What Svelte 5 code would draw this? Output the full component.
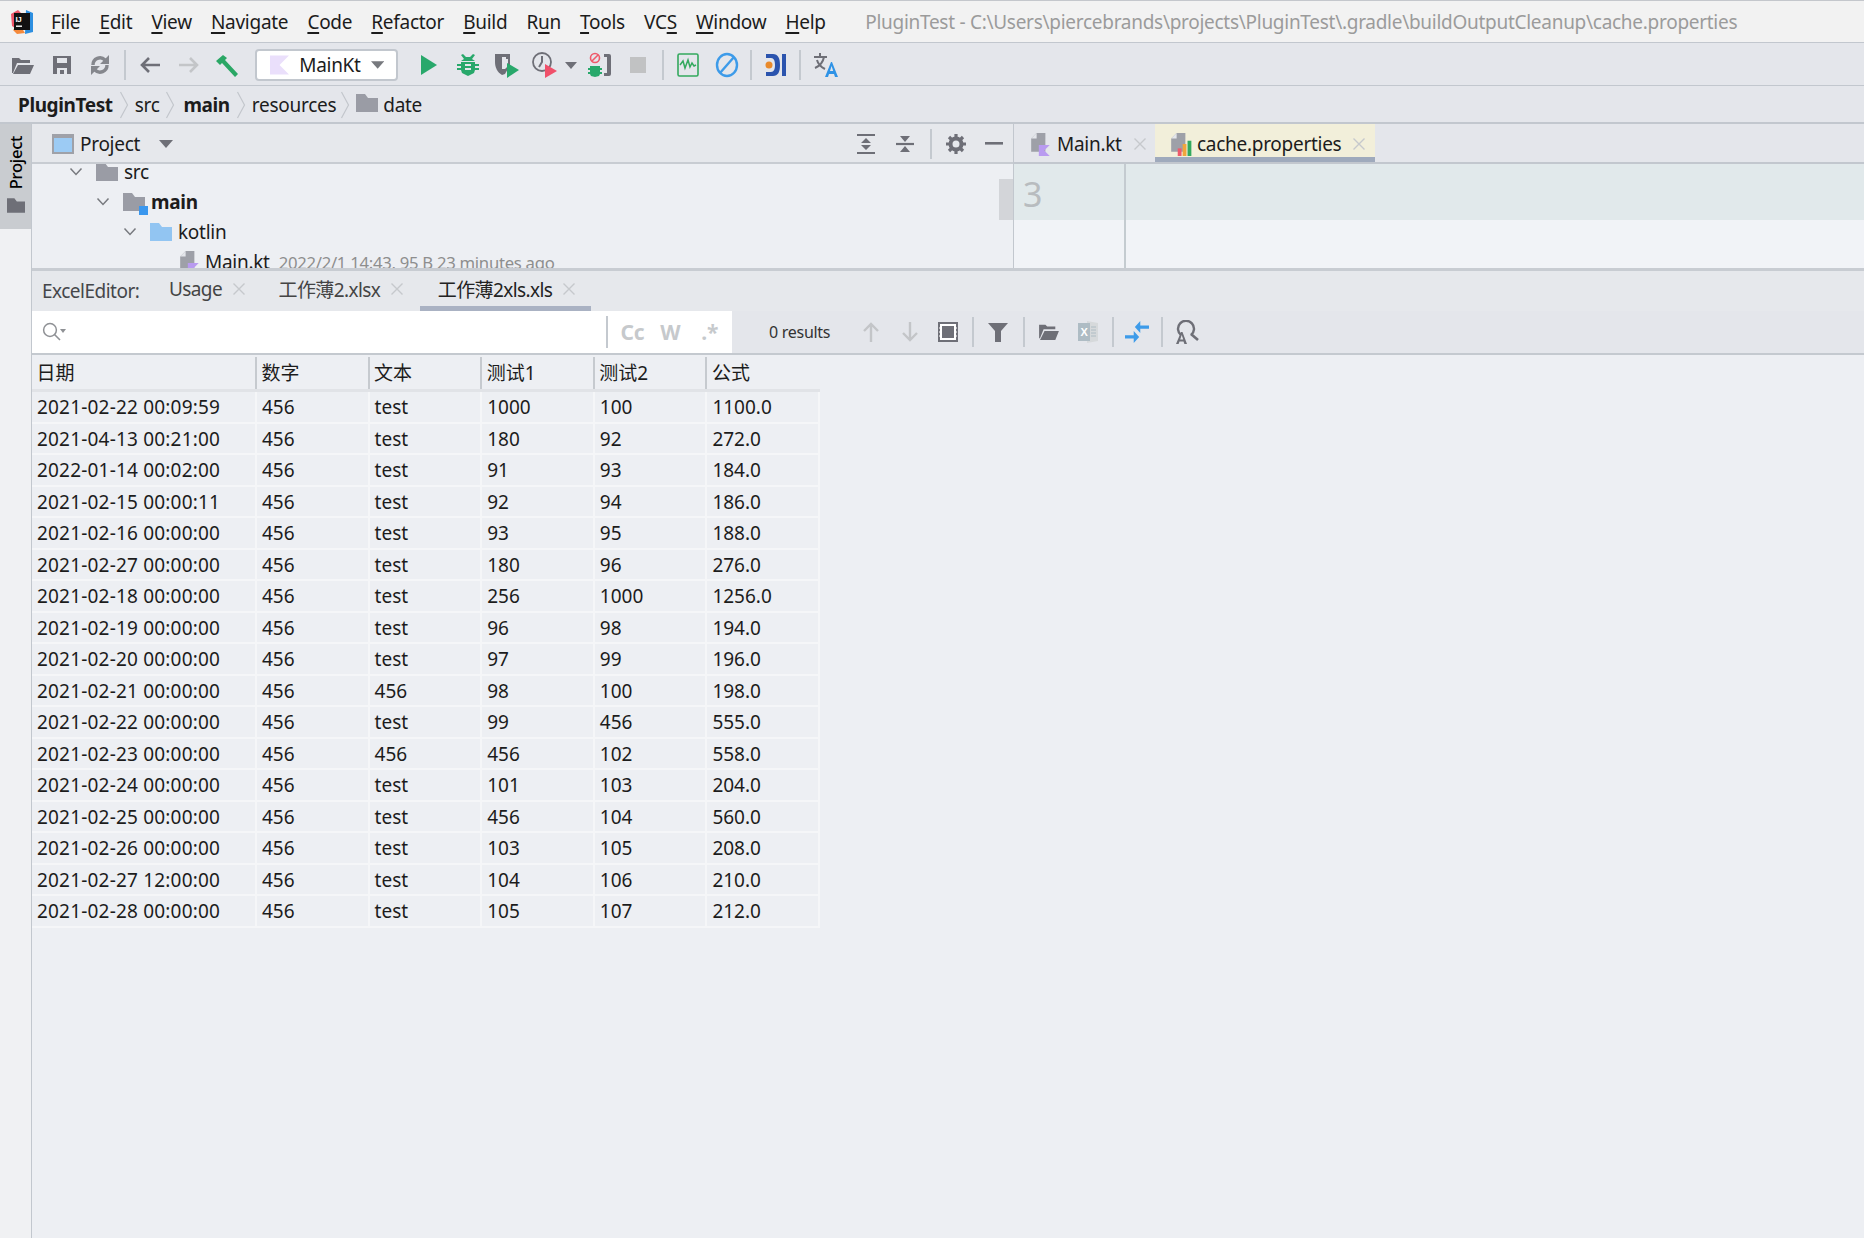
<script lang="ts">
  const menu = [
    ['', 'F', 'ile'],
    ['', 'E', 'dit'],
    ['', 'V', 'iew'],
    ['', 'N', 'avigate'],
    ['', 'C', 'ode'],
    ['', 'R', 'efactor'],
    ['', 'B', 'uild'],
    ['R', 'u', 'n'],
    ['', 'T', 'ools'],
    ['VC', 'S', ''],
    ['', 'W', 'indow'],
    ['', 'H', 'elp']
  ];

  const columns = ['日期', '数字', '文本', '测试1', '测试2', '公式'];

  const rows = [
    ['2021-02-22 00:09:59', '456', 'test', '1000', '100', '1100.0'],
    ['2021-04-13 00:21:00', '456', 'test', '180', '92', '272.0'],
    ['2022-01-14 00:02:00', '456', 'test', '91', '93', '184.0'],
    ['2021-02-15 00:00:11', '456', 'test', '92', '94', '186.0'],
    ['2021-02-16 00:00:00', '456', 'test', '93', '95', '188.0'],
    ['2021-02-27 00:00:00', '456', 'test', '180', '96', '276.0'],
    ['2021-02-18 00:00:00', '456', 'test', '256', '1000', '1256.0'],
    ['2021-02-19 00:00:00', '456', 'test', '96', '98', '194.0'],
    ['2021-02-20 00:00:00', '456', 'test', '97', '99', '196.0'],
    ['2021-02-21 00:00:00', '456', '456', '98', '100', '198.0'],
    ['2021-02-22 00:00:00', '456', 'test', '99', '456', '555.0'],
    ['2021-02-23 00:00:00', '456', '456', '456', '102', '558.0'],
    ['2021-02-24 00:00:00', '456', 'test', '101', '103', '204.0'],
    ['2021-02-25 00:00:00', '456', 'test', '456', '104', '560.0'],
    ['2021-02-26 00:00:00', '456', 'test', '103', '105', '208.0'],
    ['2021-02-27 12:00:00', '456', 'test', '104', '106', '210.0'],
    ['2021-02-28 00:00:00', '456', 'test', '105', '107', '212.0']
  ];
</script>

{#snippet folder(color = '#9a9ca5')}
  <svg class="folder" width="22" height="18" viewBox="0 0 22 18"><path d="M0 0h9l3 4h10v14H0z" fill={color} /></svg>
{/snippet}

{#snippet close()}
  <svg class="close" width="14" height="14" viewBox="0 0 14 14"><path d="M1.5 1.5l11 11M12.5 1.5l-11 11" stroke="#c6c9cc" stroke-width="1.4" fill="none" /></svg>
{/snippet}

{#snippet crumb()}
  <svg class="crumb" width="10" height="28" viewBox="0 0 10 28"><path d="M1.5 1l7 13-7 13" stroke="#c3c6cc" stroke-width="1.2" fill="none" /></svg>
{/snippet}

{#snippet chevron()}
  <svg class="chev" width="14" height="10" viewBox="0 0 14 10"><path d="M1.5 1.5L7 7.5l5.5-6" stroke="#77797e" stroke-width="1.5" fill="none" /></svg>
{/snippet}

{#snippet fileBase()}
  <path d="M6 1h8v17H1V6z" fill="#9ea0a8" /><path d="M6 1v5H1z" fill="#e4e6eb" />
{/snippet}

<div class="ide">
  <header class="menubar">
    <svg class="logo" width="24" height="26" viewBox="0 0 24 26">
      <path d="M1 5L8 1l6 6-6 14-6-4z" fill="#f0566a" />
      <path d="M3 21l6-6 6 9-8 1z" fill="#f58a3c" />
      <path d="M16 1l7 3v19l-8 2z" fill="#2d8fe0" />
      <rect x="4" y="4" width="16" height="17" fill="#111" />
      <text x="5.4" y="13" class="logo-text">IJ</text>
      <rect x="6" y="16.5" width="6" height="1.4" fill="#fff" />
    </svg>
    <nav class="menu">
      {#each menu as [pre, key, post]}
        <span>{pre}<u>{key}</u>{post}</span>
      {/each}
    </nav>
    <span class="title">PluginTest - C:\Users\piercebrands\projects\PluginTest\.gradle\buildOutputCleanup\cache.properties</span>
  </header>

  <div class="toolbar">
    <span class="btn"><svg width="24" height="20" viewBox="0 0 24 20"><path d="M1 3h7l2 2h9v3H6L2 18H1z M7 10h16l-4 9H2z" fill="#6e6f77" /></svg></span>
    <span class="btn"><svg width="20" height="20" viewBox="0 0 20 20"><path d="M1 1h18v18H1z M5 3v5h10V3z M5 13v6h10v-6z" fill="#6e6f77" fill-rule="evenodd" /><rect x="8" y="15" width="4" height="4" fill="#6e6f77" /></svg></span>
    <span class="btn"><svg width="22" height="22" viewBox="0 0 22 22"><path d="M4 11a7 7 0 0 1 12-5M18 11a7 7 0 0 1-12 5" stroke="#85878d" stroke-width="3.4" fill="none" /><path d="M20 1v9h-9zM2 21v-9h9z" fill="#85878d" /></svg></span>
    <span class="sep"></span>
    <span class="btn"><svg width="22" height="18" viewBox="0 0 22 18"><path d="M21 9H3M10 2L3 9l7 7" stroke="#6e6f77" stroke-width="2.6" fill="none" /></svg></span>
    <span class="btn"><svg width="22" height="18" viewBox="0 0 22 18"><path d="M1 9h18M12 2l7 7-7 7" stroke="#c3c5c8" stroke-width="2.6" fill="none" /></svg></span>
    <span class="btn"><svg width="24" height="24" viewBox="0 0 24 24"><path d="M1 8l7-6 4 3-2 2 13 14-3 3L7 10l-2 2z" fill="#2aa765" /></svg></span>
    <div class="combo">
      <svg width="20" height="20" viewBox="0 0 20 20"><path d="M0 0h20L10 10l10 10H0z" fill="#eadffb" /></svg>
      <span>MainKt</span>
      <svg width="14" height="8" viewBox="0 0 14 8"><path d="M0 0h14L7 8z" fill="#77797e" /></svg>
    </div>
    <span class="btn"><svg width="16" height="20" viewBox="0 0 16 20"><path d="M0 0l16 10L0 20z" fill="#28a86b" /></svg></span>
    <span class="btn"><svg width="22" height="24" viewBox="0 0 22 24"><path d="M6 1l3 3h4l3-3 2 1-3 4 3 2H4l3-2-3-4z" fill="#28a86b" /><path d="M4 9h14v2h4v2h-4v2h4v2h-4l-1 3-6 3-6-3-1-3H0v-2h4v-2H0v-2h4z" fill="#28a86b" /><path d="M8 11h6v2H8zM8 15h6v2H8z" fill="#e4e6eb" /></svg></span>
    <span class="btn"><svg width="26" height="26" viewBox="0 0 26 26"><path d="M1 2h15v11l-5 9-3 1C3 20 1 15 1 10z" fill="#6e6f77" /><path d="M8 5h4v2h2v7l-3 3H8z" fill="#e4e6eb" /><path d="M13 11l12 7-12 8z" fill="#28a86b" /></svg></span>
    <span class="btn"><svg width="26" height="26" viewBox="0 0 26 26"><circle cx="10" cy="10" r="9" stroke="#6e6f77" stroke-width="1.8" fill="none" /><path d="M10 4v6l-3 5" stroke="#6e6f77" stroke-width="2" fill="none" /><path d="M13 12l12 7-12 7z" fill="#f0506a" /></svg></span>
    <span class="caret"><svg width="12" height="7" viewBox="0 0 12 7"><path d="M0 0h12L6 7z" fill="#6e6f77" /></svg></span>
    <span class="btn"><svg width="24" height="26" viewBox="0 0 24 26"><circle cx="7" cy="6" r="4.5" stroke="#ef5a6b" stroke-width="1.6" fill="none" /><path d="M4 9l6-6" stroke="#ef5a6b" stroke-width="1.6" /><path d="M2 14h10v2h2v2h-2v2h2v2h-2l-1 2-4 1-4-1-1-2H0v-2h2v-2H0v-2h2z" fill="#28a86b" /><path d="M16 2h5a2 2 0 0 1 2 2v18a2 2 0 0 1-2 2h-5v-3h3V5h-3z" fill="#6e6f77" /></svg></span>
    <span class="btn"><span class="stop"></span></span>
    <span class="sep"></span>
    <span class="btn"><svg width="22" height="24" viewBox="0 0 22 24"><rect x="1" y="1" width="20" height="22" rx="1.5" stroke="#33a95e" stroke-width="1.6" fill="none" /><path d="M3 12l3-4 2 7 3-8 2 7 2-4 2 3 2-1" stroke="#33a95e" stroke-width="1.5" fill="none" /></svg></span>
    <span class="btn"><svg width="24" height="26" viewBox="0 0 24 26"><ellipse cx="12" cy="13" rx="10" ry="11" stroke="#3d9be9" stroke-width="2.4" fill="none" /><path d="M5 21L19 5" stroke="#3d9be9" stroke-width="2.4" /></svg></span>
    <span class="sep"></span>
    <span class="btn"><svg width="22" height="24" viewBox="0 0 22 24"><path d="M1 1h7c5 0 7 4 7 11s-2 11-7 11H1v-4h5c3 0 4-3 4-7s-1-7-4-7H1z" fill="#2b54ae" /><circle cx="4" cy="12" r="3.5" fill="#e98a2c" /><rect x="17" y="1" width="4" height="22" fill="#2b54ae" /></svg></span>
    <span class="sep"></span>
    <span class="btn"><svg width="26" height="26" viewBox="0 0 26 26"><path d="M7 1v3M1 5h13M11 5c-1 5-4 9-9 11M4 8c1 4 4 7 8 9" stroke="#6e6f77" stroke-width="2" fill="none" /><path d="M18 10l-6 15h3l1-3h5l1 3h3l-6-15zM17 19l1.6-5 1.6 5z" fill="#2f93e6" fill-rule="evenodd" /></svg></span>
  </div>

  <div class="breadcrumb">
    <b>PluginTest</b>
    {@render crumb()}
    <span>src</span>
    {@render crumb()}
    <b class="mod">main</b>
    {@render crumb()}
    <span class="res">resources</span>
    {@render crumb()}
    {@render folder()}
    <span class="leaf">date</span>
  </div>

  <div class="workspace">
    <aside class="stripe">
      <div class="stripe-tab">
        <span class="vertical">Project</span>
        <svg width="18" height="15" viewBox="0 0 22 18"><path d="M0 0h9l3 4h10v14H0z" fill="#6e6f77" /></svg>
      </div>
    </aside>

    <div class="main">
      <section class="top">
        <div class="project">
          <div class="panel-head">
            <svg class="tool" width="22" height="20" viewBox="0 0 22 20"><rect width="22" height="20" fill="#9fa1a8" /><rect x="2" y="4" width="18" height="14" fill="#9ccbf4" /></svg>
            <span class="panel-title">Project</span>
            <svg class="panel-caret" width="14" height="8" viewBox="0 0 14 8"><path d="M0 0h14L7 8z" fill="#6e6f77" /></svg>
            <span class="spacer"></span>
            <svg class="head-ico" width="20" height="20" viewBox="0 0 20 20"><path d="M1 1h18M1 19h18" stroke="#6e6f77" stroke-width="2.2" /><path d="M10 4l5 5H5zM10 16l-5-5h10z" fill="#6e6f77" /></svg>
            <svg class="head-ico mid" width="20" height="20" viewBox="0 0 20 20"><path d="M1 10h18" stroke="#6e6f77" stroke-width="2.2" /><path d="M10 8L5 2h10zM10 12l5 6H5z" fill="#6e6f77" /></svg>
            <span class="head-sep"></span>
            <svg class="head-ico" width="20" height="20" viewBox="0 0 20 20"><circle cx="10" cy="10" r="5.5" stroke="#6e6f77" stroke-width="4" fill="none" /><path d="M10 0v4M10 16v4M0 10h4M16 10h4M3 3l3 3M14 14l3 3M17 3l-3 3M6 14l-3 3" stroke="#6e6f77" stroke-width="3.2" /></svg>
            <svg class="head-ico last" width="18" height="4" viewBox="0 0 18 4"><rect width="18" height="2.6" fill="#6e6f77" /></svg>
          </div>
          <div class="tree">
            <div class="node lvl0">{@render chevron()}{@render folder()}<span>src</span></div>
            <div class="node lvl1">
              {@render chevron()}
              <span class="badged">{@render folder()}<i class="badge"></i></span>
              <b>main</b>
            </div>
            <div class="node lvl2">{@render chevron()}{@render folder('#92c5f2')}<span>kotlin</span></div>
            <div class="node lvl3">
              <svg width="22" height="24" viewBox="0 0 20 22"><g>{@render fileBase()}</g><path d="M8 12h10l-5 5 5 5H8z" fill="#b99bf0" /></svg>
              <span>Main.kt</span>
              <span class="meta">2022/2/1 14:43, 95 B 23 minutes ago</span>
            </div>
            <div class="scrollthumb"></div>
          </div>
        </div>

        <div class="editor">
          <div class="tabs">
            <div class="tab">
              <svg width="22" height="24" viewBox="0 0 20 22"><g>{@render fileBase()}</g><path d="M8 12h10l-5 5 5 5H8z" fill="#b99bf0" /></svg>
              <span>Main.kt</span>
              {@render close()}
            </div>
            <div class="tab active">
              <svg width="22" height="24" viewBox="0 0 20 22"><g>{@render fileBase()}</g><rect x="7" y="15" width="3.5" height="7" fill="#ef5a6b" /><rect x="11.5" y="11" width="3.5" height="11" fill="#f0a63c" /><rect x="16" y="8" width="3.5" height="14" fill="#33a95e" /></svg>
              <span>cache.properties</span>
              {@render close()}
            </div>
          </div>
          <div class="code">
            <div class="caret-line"><span class="gutter"><span class="lineno">3</span></span></div>
            <div class="plain-line"><span class="gutter"></span></div>
          </div>
        </div>
      </section>

      <section class="bottom">
        <div class="tool-tabs">
          <span class="tool-label">ExcelEditor:</span>
          <div class="tool-tab">Usage{@render close()}</div>
          <div class="tool-tab">工作薄2.xlsx{@render close()}</div>
          <div class="tool-tab on">工作薄2xls.xls{@render close()}</div>
        </div>

        <div class="searchbar">
          <div class="search">
            <svg class="lens" width="24" height="20" viewBox="0 0 24 20"><circle cx="8" cy="8" r="6.4" stroke="#8f9195" stroke-width="1.5" fill="none" /><path d="M12.5 12.5L18 18" stroke="#8f9195" stroke-width="1.6" /><path d="M18 7h6l-3 4z" fill="#8f9195" /></svg>
            <span class="field"></span>
            <span class="search-sep"></span>
            <span class="opt cc">Cc</span>
            <span class="opt w">W</span>
            <span class="opt rx">.*</span>
          </div>
          <span class="results">0 results</span>
          <span class="sb"><svg width="16" height="20" viewBox="0 0 16 20"><path d="M8 20V3M1 9l7-7 7 7" stroke="#c3c5c8" stroke-width="2.4" fill="none" /></svg></span>
          <span class="sb"><svg width="16" height="20" viewBox="0 0 16 20"><path d="M8 0v17M1 11l7 7 7-7" stroke="#c3c5c8" stroke-width="2.4" fill="none" /></svg></span>
          <span class="sb"><svg width="20" height="20" viewBox="0 0 20 20"><path d="M1 1h18v18H1z" fill="#fff" stroke="#6e6f77" stroke-width="2" /><rect x="4" y="4" width="12" height="12" fill="#6e6f77" /><path d="M1 6h3M1 10h3M1 14h3M16 6h3M16 10h3M16 14h3" stroke="#fff" /></svg></span>
          <span class="sb-sep"></span>
          <span class="sb"><svg width="20" height="20" viewBox="0 0 20 20"><path d="M0 1h20l-7 8v11H7V9z" fill="#6e6f77" /></svg></span>
          <span class="sb-sep wide"></span>
          <span class="sb"><svg width="22" height="18" viewBox="0 0 24 20"><path d="M1 2h7l2 2h9v3H6L2 17H1z M7 9h16l-4 10H2z" fill="#6e6f77" /></svg></span>
          <span class="sb"><svg width="22" height="24" viewBox="0 0 22 24"><path d="M10 1l11 2v18l-11 2z" fill="#d6d9db" /><rect x="1" y="3" width="12" height="18" fill="#aebcc4" /><text x="3.6" y="15.5" class="x-text">X</text><path d="M14 7h5M14 10h5M14 13h5M14 16h5" stroke="#aebcc4" /></svg></span>
          <span class="sb-sep"></span>
          <span class="sb"><svg width="24" height="22" viewBox="0 0 22 20"><path d="M9 5.5L14 0v4h8v3h-8v4z" fill="#3d9be9" /><path d="M13 14.5L8 9v4H0v3h8v4z" fill="#3d9be9" /></svg></span>
          <span class="sb-sep"></span>
          <span class="sb"><svg width="24" height="24" viewBox="0 0 24 24"><path d="M6 15a8 8 0 1 1 10 0" stroke="#6e6f77" stroke-width="2.4" fill="none" /><path d="M16 14l7 6" stroke="#6e6f77" stroke-width="2.6" /><path d="M6 12L1 24h2.6l.9-2.4h4l.9 2.4H12L7.5 12zM5.2 19.4l1.5-4.4 1.5 4.4z" fill="#6e6f77" fill-rule="evenodd" /></svg></span>
        </div>

        <div class="sheet">
          <div class="sheet-head">
            {#each columns as col}
              <div class="hcell">{col}</div>
            {/each}
          </div>
          {#each rows as row}
            <div class="sheet-row">
              {#each row as cell}
                <div class="cell">{cell}</div>
              {/each}
            </div>
          {/each}
        </div>
      </section>
    </div>
  </div>
</div>

<style>
  :global(body) {
    margin: 0;
    background: #edeff3;
  }

  .ide {
    width: 1864px;
    height: 1238px;
    display: flex;
    flex-direction: column;
    overflow: hidden;
    font-family: 'Noto Sans', 'Noto Sans CJK SC', sans-serif;
    font-size: 19px;
    letter-spacing: -0.28px;
    color: #1c1c1c;
  }

  .menubar {
    height: 43px;
    flex: none;
    display: flex;
    align-items: center;
    background: #f2f2f2;
    border-top: 1px solid #c4c7cc;
    box-sizing: border-box;
    border-bottom: 1px solid #c2c7ce;
  }

  .logo {
    margin-left: 10px;
    margin-right: 17px;
  }

  .logo-text {
    font-family: 'Liberation Sans', sans-serif;
    font-size: 8px;
    font-weight: 700;
    fill: #fff;
  }

  .x-text {
    font-family: 'Liberation Sans', sans-serif;
    font-size: 11px;
    font-weight: 700;
    fill: #fff;
  }

  .menu {
    display: flex;
    gap: 19.1px;
  }

  .menu u {
    text-decoration-thickness: 2px;
    text-underline-offset: 3px;
  }

  .title {
    margin-left: 39.5px;
    color: #9b9b9b;
  }

  .toolbar {
    height: 43px;
    flex: none;
    display: flex;
    align-items: center;
    padding: 2px 0 0 4px;
    background: #e4e6eb;
    border-bottom: 1px solid #c2c7ce;
    box-sizing: border-box;
  }

  .btn {
    width: 38.6px;
    height: 100%;
    flex: none;
    display: flex;
    align-items: center;
    justify-content: center;
  }

  .sep {
    width: 2px;
    height: 30px;
    margin: 0 5px 0 4px;
    flex: none;
    background: #c4c9cf;
  }

  .combo {
    width: 143px;
    height: 32px;
    margin: 0 12px 0 8.5px;
    padding: 0 12px 0 13px;
    flex: none;
    box-sizing: border-box;
    display: flex;
    align-items: center;
    gap: 10px;
    background: #fff;
    border: 2px solid #c2c7ce;
    border-radius: 4px;
  }

  .caret {
    width: 14px;
    margin-right: 2px;
    flex: none;
    display: flex;
    justify-content: center;
  }

  .stop {
    width: 16px;
    height: 16px;
    background: #c1c2c3;
  }

  .breadcrumb {
    height: 36px;
    flex: none;
    display: flex;
    align-items: center;
    gap: 6px;
    padding: 2px 0 0 18px;
    background: #e4e6eb;
    box-sizing: border-box;
  }

  .breadcrumb b {
    font-weight: 700;
    letter-spacing: -0.4px;
  }

  .breadcrumb .mod {
    margin-left: 2px;
  }

  .breadcrumb .res {
    margin-right: -2px;
  }

  .breadcrumb .folder {
    margin-top: -5px;
  }

  .leaf {
    margin-left: -1px;
  }

  .workspace {
    flex: 1;
    min-height: 0;
    display: flex;
    border-top: 2px solid #c2c7ce;
  }

  .stripe {
    width: 31px;
    flex: none;
    background: #f0f1f3;
    border-right: 1px solid #c2c7ce;
    box-sizing: content-box;
  }

  .stripe-tab {
    height: 105px;
    display: flex;
    flex-direction: column;
    align-items: center;
    gap: 9px;
    padding-top: 12px;
    box-sizing: border-box;
    background: #c9ccd0;
  }

  .vertical {
    writing-mode: vertical-rl;
    transform: rotate(180deg);
    font-size: 16.5px;
    font-weight: 500;
    line-height: 20px;
    color: #000;
  }

  .main {
    flex: 1;
    min-width: 0;
    display: flex;
    flex-direction: column;
  }

  .top {
    height: 147px;
    flex: none;
    display: flex;
    border-bottom: 3px solid #c8ccd2;
    box-sizing: border-box;
  }

  .project {
    width: 981px;
    flex: none;
    display: flex;
    flex-direction: column;
    border-right: 1px solid #c2c7ce;
  }

  .panel-head {
    height: 40px;
    flex: none;
    box-sizing: border-box;
    display: flex;
    align-items: center;
    padding: 2px 0 0 20px;
    background: #e6e8ec;
    border-bottom: 2px solid #c8ccd2;
  }

  .panel-title {
    margin-left: 6px;
  }

  .panel-caret {
    margin-left: 19px;
  }

  .spacer {
    flex: 1;
  }

  .head-ico {
    margin-right: 19px;
  }

  .head-ico.mid {
    margin-right: 15px;
  }

  .head-ico.last {
    margin-right: 10px;
  }

  .head-sep {
    width: 2px;
    height: 30px;
    margin-right: 14px;
    background: #c4c9cf;
  }

  .tree {
    position: relative;
    flex: 1;
    min-height: 0;
    overflow: hidden;
    background: #edeff3;
  }

  .node {
    height: 30px;
    display: flex;
    align-items: center;
    gap: 6px;
    white-space: nowrap;
  }

  .node svg {
    flex: none;
  }

  .node .chev {
    margin-right: 7px;
  }

  .lvl0 {
    margin-top: -7px;
    padding-left: 37px;
  }

  .lvl1 {
    padding-left: 64px;
  }

  .lvl2 {
    padding-left: 91px;
  }

  .lvl3 {
    padding-left: 147px;
    gap: 4px;
  }

  .badged {
    position: relative;
    display: flex;
  }

  .badge {
    position: absolute;
    right: -3px;
    bottom: -4px;
    width: 9px;
    height: 9px;
    background: #3a97ee;
  }

  .meta {
    margin-left: 5px;
    font-size: 16.7px;
    color: #8e8e8e;
  }

  .scrollthumb {
    position: absolute;
    top: 15px;
    right: 0;
    width: 14px;
    height: 41px;
    background: #d3d5d9;
  }

  .editor {
    flex: 1;
    min-width: 0;
    display: flex;
    flex-direction: column;
  }

  .tabs {
    height: 40px;
    flex: none;
    display: flex;
    background: #e4e6eb;
    border-bottom: 2px solid #c2c7ce;
    box-sizing: border-box;
  }

  .tab {
    width: 141px;
    display: flex;
    align-items: center;
    padding: 2px 0 0 16px;
    gap: 5px;
    box-sizing: border-box;
  }

  .tab .close {
    margin-left: 6px;
  }

  .tab.active {
    width: 220px;
    padding: 7px 0 0 15px;
    background: #f2efda;
    border-bottom: 5px solid #9faabc;
  }

  .code {
    flex: 1;
    min-height: 0;
    display: flex;
    flex-direction: column;
  }

  .gutter {
    display: block;
    width: 112px;
    height: 100%;
    box-sizing: border-box;
    border-right: 2px solid #c4cbd0;
  }

  .caret-line {
    height: 56px;
    flex: none;
    background: #e1e9eb;
  }

  .plain-line {
    flex: 1;
    background: #f1f3f7;
  }

  .lineno {
    display: block;
    padding-left: 9px;
    font-size: 34px;
    line-height: 60px;
    height: 56px;
    color: #b8bcbf;
  }

  .bottom {
    flex: 1;
    min-height: 0;
    display: flex;
    flex-direction: column;
  }

  .tool-tabs {
    height: 40px;
    flex: none;
    display: flex;
    align-items: center;
    background: #e6e8ec;
    box-sizing: border-box;
  }

  .tool-label {
    margin-left: 10px;
    width: 110px;
    letter-spacing: -0.5px;
    color: #44464a;
  }

  .tool-tab {
    height: 100%;
    display: flex;
    align-items: center;
    gap: 9.5px;
    padding: 0 16px 5px 17px;
    box-sizing: border-box;
    letter-spacing: -0.6px;
    color: #444;
  }

  .tool-tab.on {
    padding: 0 15px 0 18px;
    border-bottom: 5px solid #aab2c3;
    color: #222;
  }

  .searchbar {
    height: 44px;
    flex: none;
    display: flex;
    align-items: center;
    background: #e4e6eb;
    border-bottom: 2px solid #c4c9cf;
    box-sizing: border-box;
  }

  .search {
    width: 700px;
    height: 100%;
    flex: none;
    display: flex;
    align-items: center;
    background: #fff;
  }

  .lens {
    margin-left: 10px;
  }

  .field {
    flex: 1;
  }

  .search-sep {
    width: 2px;
    height: 32px;
    background: #c4c9cf;
  }

  .opt {
    font-weight: 700;
    font-size: 21px;
    color: #c6c9cc;
  }

  .cc {
    margin-left: 12px;
  }

  .w {
    margin-left: 16px;
  }

  .rx {
    margin-left: 21px;
    margin-right: 14px;
  }

  .results {
    margin-left: 37px;
    width: 83px;
    font-size: 16px;
    color: #333;
  }

  .sb {
    width: 38.5px;
    flex: none;
    display: flex;
    justify-content: center;
  }

  .sb-sep {
    width: 2px;
    height: 30px;
    margin: 0 4.5px;
    flex: none;
    background: #c4c9cf;
  }

  .sb-sep.wide {
    margin: 0 5.5px;
  }

  .sheet {
    width: 788px;
    letter-spacing: 0;
  }

  .sheet-head,
  .sheet-row {
    display: grid;
    grid-template-columns: 225px repeat(5, 112.6px);
  }

  .sheet-head {
    height: 34px;
    border-bottom: 3px solid #e1e3e7;
    background: #edeff3;
  }

  .hcell {
    padding-left: 4.5px;
    border-right: 2px solid #c6cacf;
    box-sizing: border-box;
    margin-top: 2px;
    height: 32px;
    line-height: 33px;
  }

  .hcell:last-child {
    border-right: none;
  }

  .sheet-row {
    height: 31.5px;
    box-sizing: border-box;
    border-bottom: 2px solid #f5f6f8;
  }

  .cell {
    padding-left: 5px;
    line-height: 31px;
    box-sizing: border-box;
    border-right: 2px solid #f5f6f8;
  }

  .cell:first-child {
    letter-spacing: 0.19px;
  }
</style>
